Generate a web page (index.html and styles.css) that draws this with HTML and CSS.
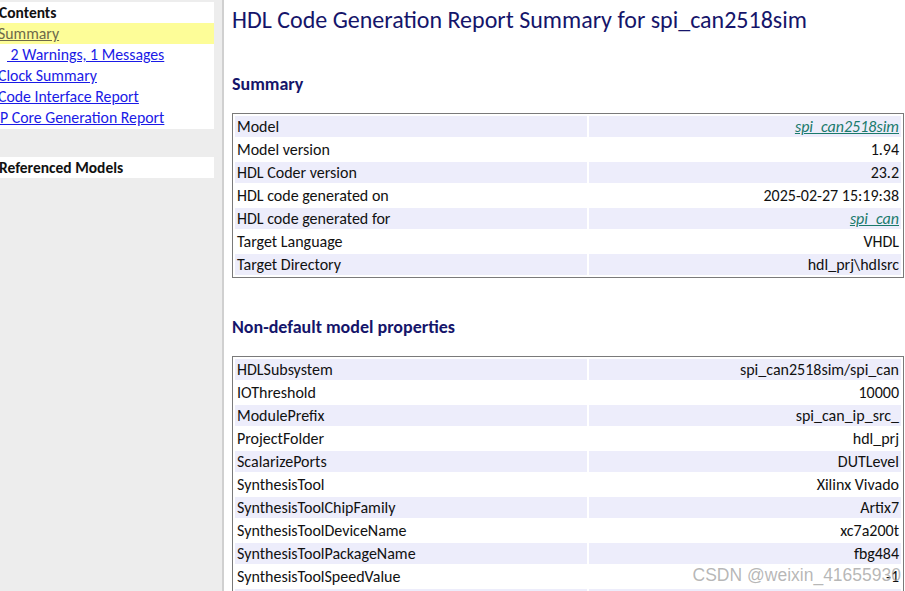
FILE: index.html
```html
<!DOCTYPE html>
<html>
<head>
<meta charset="utf-8">
<link rel="stylesheet" href="styles.css">
</head>
<body>
<div class="sidebar">
  <div class="toc">
    <div class="toc-title">Contents</div>
    <div class="toc-item active"><a href="#" class="visited">Summary</a></div>
    <div class="toc-item indent"><a href="#">&nbsp;2 Warnings, 1 Messages</a></div>
    <div class="toc-item"><a href="#">Clock Summary</a></div>
    <div class="toc-item"><a href="#">Code Interface Report</a></div>
    <div class="toc-item last"><a href="#">IP Core Generation Report</a></div>
  </div>
  <div class="toc refs">
    <div class="toc-title">Referenced Models</div>
  </div>
</div>
<div class="main">
  <h1 class="title">HDL Code Generation Report Summary for spi_can2518sim</h1>
  <h2 class="section">Summary</h2>
  <table class="report">
    <tr class="odd"><td class="key">Model</td><td class="val"><a href="#" class="mlink">spi_can2518sim</a></td></tr>
    <tr><td class="key">Model version</td><td class="val">1.94</td></tr>
    <tr class="odd"><td class="key">HDL Coder version</td><td class="val">23.2</td></tr>
    <tr><td class="key">HDL code generated on</td><td class="val">2025-02-27 15:19:38</td></tr>
    <tr class="odd"><td class="key">HDL code generated for</td><td class="val"><a href="#" class="mlink">spi_can</a></td></tr>
    <tr><td class="key">Target Language</td><td class="val">VHDL</td></tr>
    <tr class="odd"><td class="key">Target Directory</td><td class="val">hdl_prj\hdlsrc</td></tr>
  </table>
  <h2 class="section second">Non-default model properties</h2>
  <table class="report">
    <tr class="odd"><td class="key">HDLSubsystem</td><td class="val">spi_can2518sim/spi_can</td></tr>
    <tr><td class="key">IOThreshold</td><td class="val">10000</td></tr>
    <tr class="odd"><td class="key">ModulePrefix</td><td class="val">spi_can_ip_src_</td></tr>
    <tr><td class="key">ProjectFolder</td><td class="val">hdl_prj</td></tr>
    <tr class="odd"><td class="key">ScalarizePorts</td><td class="val">DUTLevel</td></tr>
    <tr><td class="key">SynthesisTool</td><td class="val">Xilinx Vivado</td></tr>
    <tr class="odd"><td class="key">SynthesisToolChipFamily</td><td class="val">Artix7</td></tr>
    <tr><td class="key">SynthesisToolDeviceName</td><td class="val">xc7a200t</td></tr>
    <tr class="odd"><td class="key">SynthesisToolPackageName</td><td class="val">fbg484</td></tr>
    <tr><td class="key">SynthesisToolSpeedValue</td><td class="val">-1</td></tr>
    <tr class="odd"><td class="key">TargetDirectory</td><td class="val">hdl_prj\hdlsrc</td></tr>
  </table>
</div>
<div class="watermark">CSDN @weixin_41655930</div>
</body>
</html>
```
FILE: styles.css
```css
html, body {
  margin: 0;
  padding: 0;
  height: 100%;
  overflow: hidden;
}
body {
  display: flex;
  font-family: Carlito, Calibri, Lato, "Noto Sans", sans-serif;
  color: #111;
  background: #fff;
  position: relative;
}
.sidebar {
  flex: none;
  width: 224px;
  box-sizing: border-box;
  background: #ededed;
  border-right: 2px solid #d0d0d0;
  padding-top: 2px;
}
.toc {
  background: #fff;
  width: 214px;
  padding: 0 0 1px 0;
  white-space: nowrap;
}
.toc-title {
  font-weight: bold;
  font-size: 15.5px;
  line-height: 21px;
  height: 21px;
  margin-left: -1px;
  color: #111;
}
.toc-item {
  font-size: 15.8px;
  line-height: 21px;
  height: 21px;
  margin-left: -2px;
}
.toc-item a {
  color: #1a1ae6;
  text-decoration: underline;
}
.toc-item.active {
  background: #fdfd98;
}
.toc-item a.visited {
  color: #6e6a4a;
}
.toc-item.indent {
  margin-left: 0;
  padding-left: 7px;
}
.toc-item.last {
  margin-left: -4px;
}
.refs {
  margin-top: 28px;
  padding: 0;
}
.main {
  flex: 1;
  padding: 0 1px 0 8px;
  min-width: 0;
}
.title {
  margin: 0;
  padding-top: 6px;
  font-size: 24px;
  line-height: 28px;
  font-weight: normal;
  color: #15156a;
}
.section {
  margin: 39px 0 0 0;
  font-size: 18px;
  line-height: 22px;
  font-weight: bold;
  color: #15156a;
}
.section.second {
  margin-top: 38px;
}
.report {
  width: 100%;
  border: 1px solid #7a7a7a;
  border-collapse: separate;
  border-spacing: 2px;
  margin-top: 18px;
  font-size: 16px;
}
.report td {
  height: 21px;
  padding: 0 2px;
  line-height: 21px;
  white-space: nowrap;
}
.report td.key {
  width: 348px;
  text-align: left;
}
.report td.val {
  text-align: right;
}
.report tr.odd td {
  background: #ededfb;
}
.mlink {
  color: #1a7a6c;
  font-style: italic;
  text-decoration: underline;
}
.watermark {
  position: absolute;
  right: 4px;
  bottom: 5px;
  font-family: "Liberation Sans", Arial, sans-serif;
  font-size: 17.5px;
  color: rgba(160, 160, 160, 0.75);
  pointer-events: none;
}
```
